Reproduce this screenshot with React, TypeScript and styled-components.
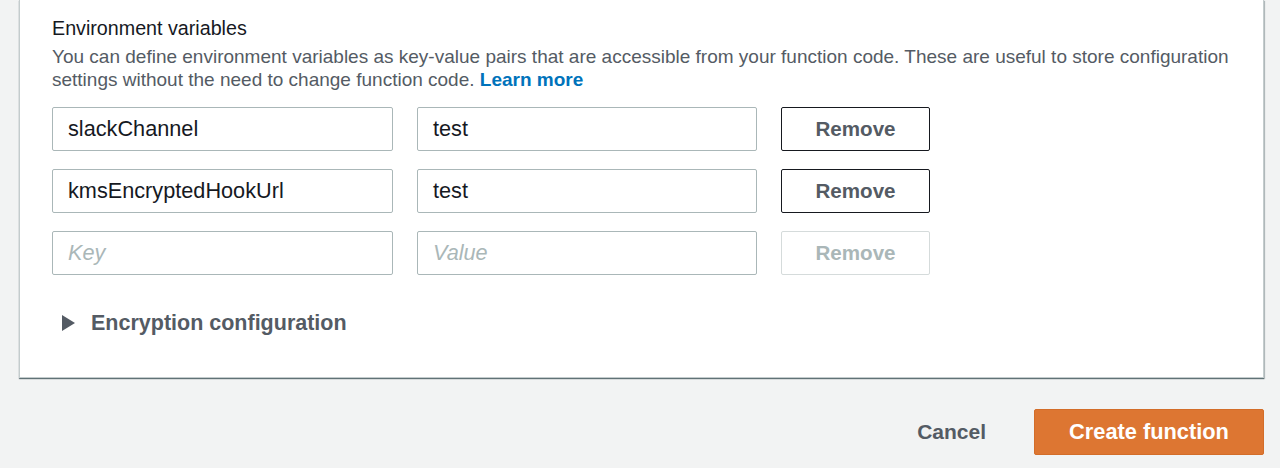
import React from "react";
import styled, { createGlobalStyle } from "styled-components";

const Global = createGlobalStyle`
  html, body { margin: 0; padding: 0; background: #f2f3f3; }
  body { font-family: "Liberation Sans", Arial, sans-serif; -webkit-font-smoothing: antialiased; }
  * { box-sizing: border-box; }
`;

const Page = styled.div`
  padding: 0 16px 0 19px;
  height: 468px;
  overflow: hidden;
`;

const Card = styled.section`
  background: #fff;
  border: 1px solid #c4cccd;
  border-top: none;
  box-shadow: 0 1px 1px 0 rgba(0, 28, 36, 0.5), 1px 1px 1px 0 rgba(0, 28, 36, 0.2);
  padding: 14px 32px 42px 32px;
`;

const Title = styled.h2`
  margin: 0;
  font-size: 19.7px;
  line-height: 28px;
  font-weight: 400;
  color: #16191f;
`;

const Description = styled.p`
  margin: 3px 0 0 0;
  font-size: 19px;
  line-height: 23px;
  color: #545b64;
`;

const Link = styled.a`
  color: #0073bb;
  font-weight: 700;
  text-decoration: none;
`;

const Rows = styled.div`
  margin-top: 16px;
  display: flex;
  flex-direction: column;
  gap: 18px;
`;

const Row = styled.div`
  display: grid;
  grid-template-columns: 341px 340px 149px;
  column-gap: 24px;
`;

const Field = styled.div<{ $placeholder?: boolean }>`
  height: 44px;
  border: 1px solid #aab7b8;
  border-radius: 2px;
  padding: 0 15px;
  display: flex;
  align-items: center;
  font-size: 21.7px;
  color: ${(p) => (p.$placeholder ? "#aab7b8" : "#16191f")};
  font-style: ${(p) => (p.$placeholder ? "italic" : "normal")};
`;

const RemoveButton = styled.button<{ $disabled?: boolean }>`
  height: 44px;
  border: 1px solid ${(p) => (p.$disabled ? "#d5dbdb" : "#16191f")};
  border-radius: 2px;
  background: #fff;
  font-family: inherit;
  font-size: 20.6px;
  font-weight: 700;
  color: ${(p) => (p.$disabled ? "#aab7b8" : "#545b64")};
  padding: 0;
  cursor: ${(p) => (p.$disabled ? "default" : "pointer")};
`;

const Expander = styled.div`
  margin-top: 36px;
  display: flex;
  align-items: center;
  gap: 16px;
  padding-left: 10px;
  height: 24px;
`;

const Caret = styled.span`
  width: 0;
  height: 0;
  border-top: 8px solid transparent;
  border-bottom: 8px solid transparent;
  border-left: 13px solid #545b64;
`;

const ExpanderLabel = styled.span`
  font-size: 21.5px;
  font-weight: 700;
  color: #545b64;
`;

const Footer = styled.div`
  margin-top: 31px;
  display: flex;
  justify-content: flex-end;
  align-items: center;
  gap: 28px;
`;

const TextButton = styled.button`
  background: none;
  border: none;
  font-family: inherit;
  font-size: 21px;
  font-weight: 700;
  color: #545b64;
  padding: 0 20px;
  height: 46px;
`;

const PrimaryButton = styled.button`
  width: 230px;
  height: 46px;
  background: #dd7632;
  border: 1px solid #d36d29;
  border-radius: 2px;
  color: #fff;
  font-family: inherit;
  font-size: 21.8px;
  font-weight: 700;
`;

const vars = [
  { key: "slackChannel", value: "test" },
  { key: "kmsEncryptedHookUrl", value: "test" },
];

export default function App() {
  return (
    <>
      <Global />
      <Page>
        <Card>
          <Title>Environment variables</Title>
          <Description>
            You can define environment variables as key-value pairs that are accessible from your function code. These are useful to store configuration settings without the need to change function code. <Link href="#">Learn more</Link>
          </Description>
          <Rows>
            {vars.map((v) => (
              <Row key={v.key}>
                <Field>{v.key}</Field>
                <Field>{v.value}</Field>
                <RemoveButton>Remove</RemoveButton>
              </Row>
            ))}
            <Row>
              <Field $placeholder>Key</Field>
              <Field $placeholder>Value</Field>
              <RemoveButton $disabled>Remove</RemoveButton>
            </Row>
          </Rows>
          <Expander>
            <Caret />
            <ExpanderLabel>Encryption configuration</ExpanderLabel>
          </Expander>
        </Card>
        <Footer>
          <TextButton>Cancel</TextButton>
          <PrimaryButton>Create function</PrimaryButton>
        </Footer>
      </Page>
    </>
  );
}
